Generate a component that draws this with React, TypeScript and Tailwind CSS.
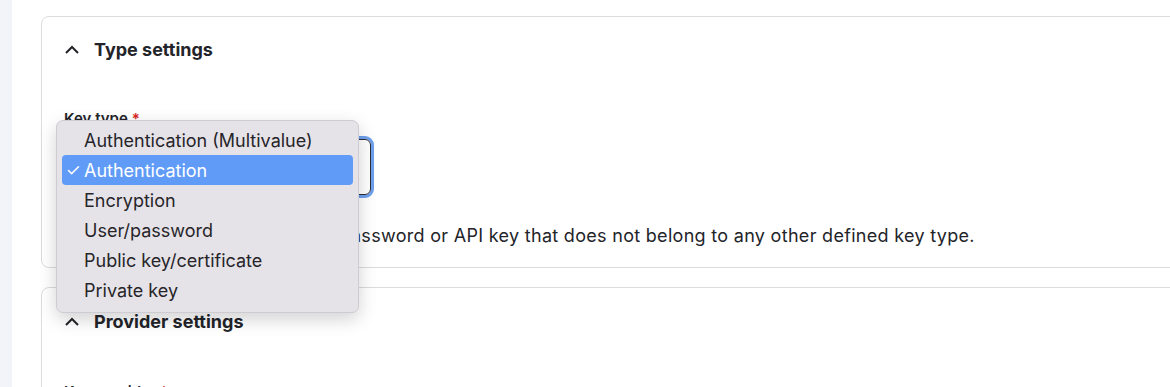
import { Check } from 'lucide-react';

const options = [
  'Authentication (Multivalue)',
  'Authentication',
  'Encryption',
  'User/password',
  'Public key/certificate',
  'Private key',
];

function Chevron() {
  return (
    <svg width="16" height="16" viewBox="0 0 16 16" className="shrink-0 text-[#232429]">
      <path d="M2 11 L8 5 L14 11" fill="none" stroke="currentColor" strokeWidth="2" />
    </svg>
  );
}

function Required() {
  return <span className="text-[#d72222] ml-1">*</span>;
}

export default function App() {
  return (
    <div className="flex h-[387px] overflow-hidden bg-white text-[#232429] font-['Inter',sans-serif]">
      <div className="w-3 shrink-0 bg-[#f3f4f9]" />

      <div className="relative flex-1 pl-[29px] pt-4">
        <section className="w-[1200px] h-[252px] rounded-lg border border-[#dcdce0] pl-[22px] pt-[21px]">
          <h3 className="flex items-center gap-[14px] text-[18px] leading-6 font-bold">
            <Chevron />
            Type settings
          </h3>

          <label className="block mt-[47px] text-[15px] leading-5 font-semibold">
            Key type
            <Required />
          </label>
          <div className="mt-[7px] w-[310px] h-[62px] rounded-[9px] border-[3px] border-[#6ea0ee]">
            <div className="h-full rounded-[6px] border border-[#2d2f36] bg-white" />
          </div>
          <p className="mt-[28px] text-[18px] leading-5 tracking-[0.3px]">
            A generic key type to use for a password or API key that does not belong to any other defined key type.
          </p>
        </section>

        <section className="mt-[19px] w-[1200px] h-[200px] rounded-lg border border-[#dcdce0] pl-[22px] pt-[22px]">
          <h3 className="flex items-center gap-[14px] text-[18px] leading-6 font-bold">
            <Chevron />
            Provider settings
          </h3>
          <label className="block mt-[48px] text-[15px] leading-5 font-semibold">
            Key provider
            <Required />
          </label>
        </section>

        <ul className="absolute left-[44px] top-[120px] w-[303px] h-[193px] rounded-[7px] border border-[#cfcbd2] bg-[#e6e3e8] shadow-[0_6px_18px_rgba(0,0,0,0.18)] px-[5px] pt-[4px]">
          {options.map((opt) => {
            const selected = opt === 'Authentication';
            return (
              <li
                key={opt}
                className={
                  selected
                    ? 'relative flex items-center h-[30px] rounded-[4px] bg-[#5f9bf7] text-white pl-[22px] text-[18px]'
                    : 'relative flex items-center h-[30px] pl-[22px] text-[18px] text-[#26252a]'
                }
              >
                {selected && (
                  <Check size={15} strokeWidth={2.5} className="absolute left-[4px] top-[8px]" />
                )}
                {opt}
              </li>
            );
          })}
        </ul>
      </div>
    </div>
  );
}
